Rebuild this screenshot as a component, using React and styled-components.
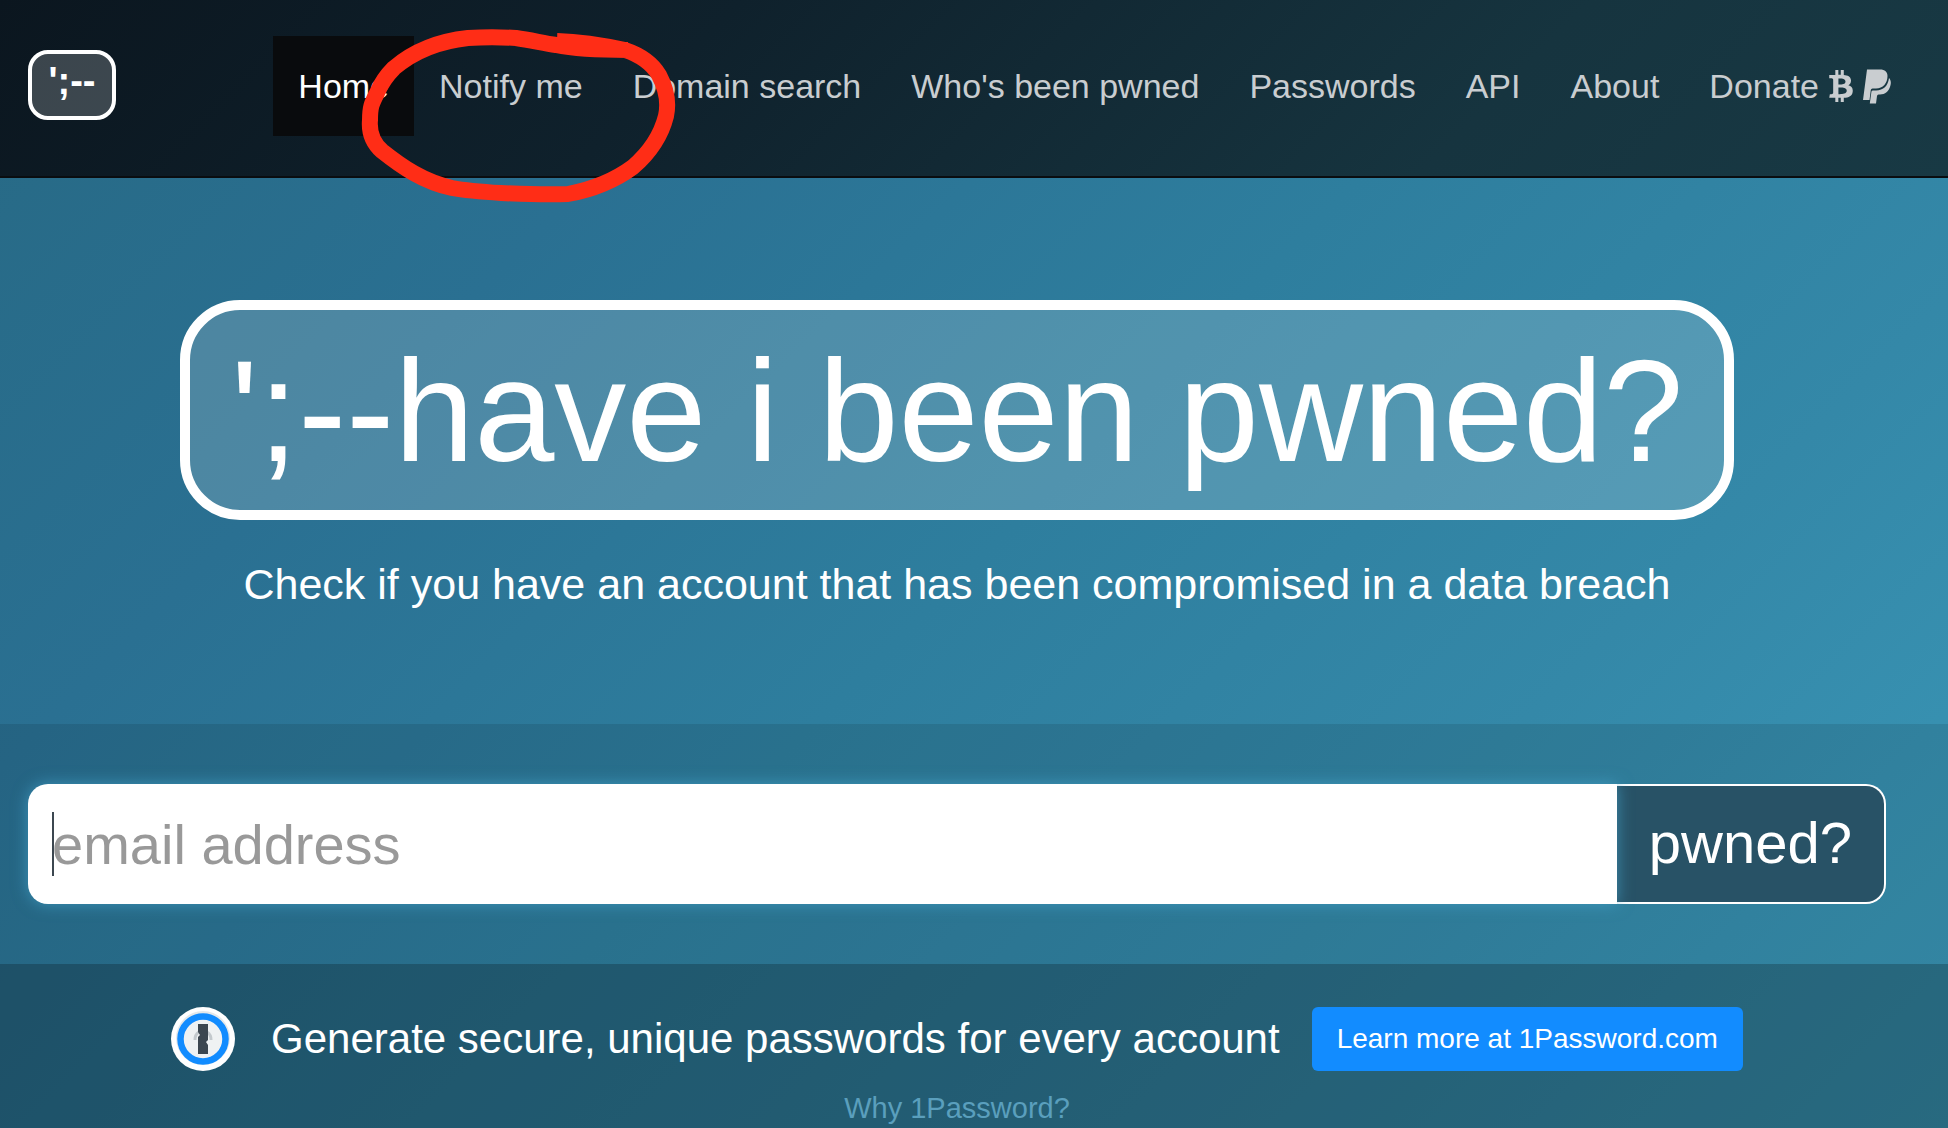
import React from "react";
import styled, { createGlobalStyle, css } from "styled-components";
import { FaBtc } from "react-icons/fa";

const V = {
  white: "#fff",
  navText: "#c9cdd0",
  blue: "#128cff",
  link: "#5a9fbd",
  red: "#ff2d16",
  dark: "#3c4750",
  gutter: "28px",
};

const GlobalStyle = createGlobalStyle`
  * {
    box-sizing: border-box;
  }

  body {
    margin: 0;
    font-family: "Liberation Sans", Helvetica, Arial, sans-serif;
    color: ${V.white};
    background: #2b7494;
  }
`;

const Page = styled.div`
  position: relative;
  display: flex;
  flex-direction: column;
  min-height: 100vh;
  background: linear-gradient(135deg, #276984 0%, #2a7092 25%, #2e7e9e 50%, #3488a8 73%, #3a98b8 100%);
`;

const Header = styled.header`
  display: flex;
  justify-content: space-between;
  align-items: flex-start;
  height: 178px;
  padding: 36px 32px 0 ${V.gutter};
  border-bottom: 2px solid #0a0d10;
  background: linear-gradient(135deg, #0b161f 0%, #0f212c 35%, #16343f 75%, #183944 100%);
`;

const Brand = styled.a`
  width: 88px;
  height: 70px;
  margin-top: 14px;
  border: 4px solid ${V.white};
  border-radius: 20px;
  background-color: rgba(255, 255, 255, 0.2);
  color: ${V.white};
  font-size: 38px;
  font-weight: bold;
  line-height: 54px;
  text-align: center;
  text-decoration: none;
`;

const Nav = styled.nav`
  display: flex;
`;

const NavLink = styled.a`
  display: flex;
  align-items: center;
  gap: 10px;
  height: 100px;
  padding: 0 25px;
  font-size: 34px;
  white-space: nowrap;
  text-decoration: none;
  color: ${(props) => (props.$active ? V.white : V.navText)};
  background-color: ${(props) => (props.$active ? "#090b0d" : "transparent")};
`;

const IconBitcoin = styled(FaBtc)`
  width: 24px;
  height: 32px;
`;

const Content = styled.main`
  display: flex;
  flex: 1;
  flex-direction: column;
`;

const Hero = styled.section`
  display: flex;
  flex-direction: column;
  align-items: center;
  height: 546px;
  padding: 122px 34px 0 0;
`;

const Title = styled.h1`
  margin: 0;
  padding: 4px 41px 0;
  border: 10px solid ${V.white};
  border-radius: 60px;
  background-color: rgba(255, 255, 255, 0.17);
  font-size: 144px;
  font-weight: normal;
  line-height: 196px;
  white-space: nowrap;
`;

const Subtitle = styled.p`
  margin: 36px 0 0;
  font-size: 43px;
  line-height: 56px;
`;

const band = css`
  padding-right: 62px;
  padding-left: ${V.gutter};
`;

const SearchForm = styled.form`
  ${band}
  display: flex;
  padding-top: 60px;
  padding-bottom: 60px;
  background-color: rgba(0, 0, 0, 0.1);
`;

const EmailField = styled.div`
  position: relative;
  flex: 1;
  min-width: 0;

  &::after {
    content: "";
    position: absolute;
    top: 28px;
    left: 24px;
    width: 2px;
    height: 64px;
    background-color: ${V.dark};
  }
`;

const EmailInput = styled.input`
  width: 100%;
  height: 120px;
  padding: 0 24px;
  border: 0;
  border-radius: 20px 0 0 20px;
  outline: none;
  background-color: ${V.white};
  box-shadow: 0 0 16px rgba(70, 165, 205, 0.7);
  font-family: inherit;
  font-size: 56px;
  color: ${V.dark};
  caret-color: transparent;

  &::placeholder {
    color: #999;
    opacity: 1;
  }
`;

const SearchButton = styled.button`
  height: 120px;
  padding: 0 32px 4px;
  border: 2px solid ${V.white};
  border-left: 0;
  border-radius: 0 20px 20px 0;
  background-color: #285266;
  color: ${V.white};
  font-family: inherit;
  font-size: 58px;
`;

const Promo = styled.section`
  ${band}
  display: flex;
  flex: 1;
  flex-direction: column;
  align-items: center;
  padding-top: 43px;
  background-color: rgba(0, 0, 0, 0.3);
`;

const PromoRow = styled.div`
  display: flex;
  align-items: center;
`;

const PromoText = styled.span`
  margin: 0 32px 0 36px;
  font-size: 42px;
  line-height: 64px;
  white-space: nowrap;
`;

const PromoButton = styled.a`
  height: 64px;
  padding: 0 25px;
  border-radius: 6px;
  background-color: ${V.blue};
  color: ${V.white};
  font-size: 28px;
  line-height: 64px;
  white-space: nowrap;
  text-decoration: none;
`;

const WhyLink = styled.a`
  margin-top: 18px;
  color: ${V.link};
  font-size: 29px;
  line-height: 38px;
  text-decoration: none;
`;

const Marker = styled.svg`
  position: absolute;
  top: 0;
  left: 350px;
  pointer-events: none;
`;

const links = ["Home", "Notify me", "Domain search", "Who's been pwned", "Passwords", "API", "About"];

const IconPaypal = () => (
  <svg width="28" height="35" viewBox="0 0 28 35" fill="currentColor" aria-hidden="true">
    <path d="M4 .5H17C22 .5 24.5 3 24.5 7C24.500 14 20 19.500 13 19.500H9.500Q8 19.500 7.800 21L6.500 31H0Z" />
    <path d="M26 9C28 11 28.300 14 27.300 17C26 22 22 25.500 17 25.500H15.500Q14.200 25.500 14 27L13 34.500H6.800L8.400 22.800Q8.600 21.400 10 21.400H13C20.500 21.400 25 17 26 9Z" />
  </svg>
);

const OnePasswordLogo = () => (
  <svg width="64" height="64" viewBox="0 0 64 64" role="img" aria-label="1Password">
    <circle cx="32" cy="32" r="32" fill="#fff" />
    <circle cx="32" cy="31" r="27" fill="#e3e8ea" />
    <circle cx="32" cy="32" r="22.5" fill="#eff2f3" stroke="#128cff" strokeWidth="6.5" />
    <path d="M24 33a9 9 0 0 1 4-8M36 25a9 9 0 0 1 4 8" fill="none" stroke="#c3c9cd" strokeWidth="3" />
    <path d="M27 17h10v16l-2 2 2 3v9H27V30l2-2-2-3z" fill={V.dark} />
  </svg>
);

const App = () => (
  <>
    <GlobalStyle />
    <Page>
      <Header>
        <Brand href="#">';--</Brand>
        <Nav>
          {links.map((name, i) => (
            <NavLink key={name} href="#" $active={i === 0}>
              {name}
            </NavLink>
          ))}
          <NavLink href="#">
            Donate
            <IconBitcoin />
            <IconPaypal />
          </NavLink>
        </Nav>
      </Header>

      <Content>
        <Hero>
          <Title>';--have i been pwned?</Title>
          <Subtitle>Check if you have an account that has been compromised in a data breach</Subtitle>
        </Hero>

        <SearchForm onSubmit={(e) => e.preventDefault()}>
          <EmailField>
            <EmailInput type="email" placeholder="email address" aria-label="email address" autoFocus />
          </EmailField>
          <SearchButton type="submit">pwned?</SearchButton>
        </SearchForm>

        <Promo>
          <PromoRow>
            <OnePasswordLogo />
            <PromoText>Generate secure, unique passwords for every account</PromoText>
            <PromoButton href="#">Learn more at 1Password.com</PromoButton>
          </PromoRow>
          <WhyLink href="#">Why 1Password?</WhyLink>
        </Promo>
      </Content>

      <Marker width="340" height="220" viewBox="350 0 340 220" aria-hidden="true">
        <path
          d="M557 41C585 42 606 46 625 50C643 56 653 65 659 75C667 90 669 102 666 116C661 136 648 154 633 167C614 181 590 190 568 194C545 195 522 194 501 193C484 192 468 191 452 188C424 182 402 167 382 151C372 142 369 131 370 120C370 106 372 103 377 93C382 81 388 74 394 68C414 51 440 41 468 38C484 37 500 37 516 38C530 40 543 43 556 45C575 49 600 50 628 50"
          fill="none"
          stroke={V.red}
          strokeWidth="16"
          strokeLinejoin="round"
        />
      </Marker>
    </Page>
  </>
);

export default App;
